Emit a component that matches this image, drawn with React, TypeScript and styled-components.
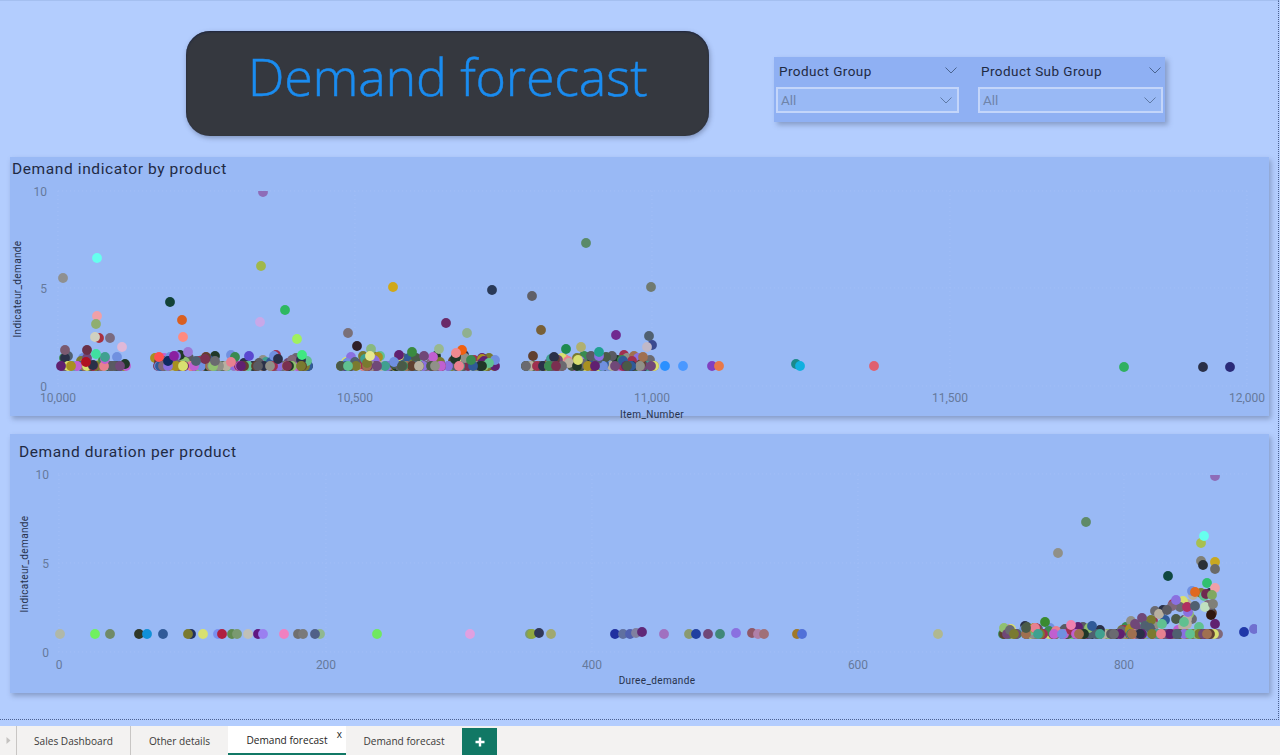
import React, { FunctionComponent } from "react";
import styled, { createGlobalStyle } from "styled-components";

const GlobalStyle = createGlobalStyle`
  html, body {
    margin: 0;
    padding: 0;
    overflow: hidden;
    background: #f3f2f1;
  }
`;

type Dot = [number, number, string];

// same seed each run so the clusters stay where they are
const makeRandom = (seed: number) => () => {
  seed = (seed * 1664525 + 1013904223) % 4294967296;
  return seed / 4294967296;
};

const PALETTE = [
  "#5a5a62", "#7a3050", "#3a8a50", "#c060d0", "#d8e070", "#7a7a30", "#2a3048", "#8a70e0", "#a07050",
  "#40a090", "#704878", "#909088", "#e88090", "#b8b0a0", "#305a98", "#602070", "#90c070", "#203828",
  "#a89020", "#7090e0", "#a03050", "#506070", "#60c090", "#604030", "#6a6a70", "#4a5a48", "#806878",
];

const cluster = (seed: number, from: number, to: number, base: number, count: number, lift: (x: number, r: number) => number): Dot[] => {
  const random = makeRandom(seed);
  const dots: Dot[] = [];
  for (let i = 0; i < count; i++) {
    const x = from + random() * (to - from);
    const up = random() < 0.7 ? 0 : lift(x, random());
    dots.push([Math.round(x), Math.round(base - up), PALETTE[Math.floor(random() * PALETTE.length)]]);
  }
  return dots;
};

const flatLift = (_x: number, r: number) => 2 + r * 9;

const DEMAND_DOTS: Dot[] = [
  ...cluster(11, 59, 126, 366, 70, (_x, r) => r * 10),
  ...cluster(12, 155, 308, 366, 170, flatLift),
  ...cluster(13, 340, 495, 366, 170, flatLift),
  ...cluster(14, 525, 655, 366, 150, flatLift),
  [63, 278, "#8f9090"], [97, 258, "#66ffee"], [97, 316, "#f0a0a8"], [96, 324, "#8fae70"], [99, 338, "#a83040"],
  [95, 337, "#d0d0c0"], [110, 338, "#7a6a80"], [122, 347, "#e0b8d8"], [65, 350, "#7a5a70"], [87, 350, "#6a3048"],
  [96, 354, "#40e0a0"], [86, 362, "#b01020"], [170, 302, "#124238"], [182, 320, "#d95f20"], [183, 337, "#ff8a80"],
  [188, 352, "#9a7ad8"], [159, 357, "#ff5050"], [168, 361, "#102a60"], [174, 356, "#8a20a0"], [263, 192, "#8e6cb8"],
  [261, 266, "#a0b84a"], [260, 322, "#c8a8e8"], [285, 310, "#2eb860"], [297, 339, "#a0f060"], [302, 355, "#40e880"],
  [249, 356, "#5a48d0"], [348, 333, "#7a7078"], [357, 346, "#301f28"], [371, 349, "#88b880"], [370, 356, "#e8e890"],
  [393, 287, "#d0a818"], [412, 352, "#3a8a40"], [446, 323, "#6a2a68"], [467, 333, "#90b090"], [492, 290, "#2a3a58"],
  [532, 296, "#606068"], [541, 330, "#786038"], [586, 243, "#5a8a68"], [651, 287, "#707a70"], [616, 335, "#702a90"],
  [649, 336, "#506070"], [652, 345, "#3a4a90"], [566, 349, "#1e8a50"], [581, 347, "#b0b070"], [599, 352, "#20a090"],
  [647, 347, "#c0b8c8"], [439, 349, "#98b890"], [462, 350, "#f06010"], [456, 353, "#f08a90"],
  [665, 366, "#2a90ff"], [683, 366, "#4a98ff"], [712, 366, "#8040c0"], [719, 366, "#e87848"], [796, 364, "#1a8a8a"],
  [800, 366, "#10b0e0"], [874, 366, "#e06070"], [1124, 367, "#30b060"], [1203, 367, "#2a3048"], [1230, 367, "#2a2a78"],
];

const rampLift = (x: number, r: number) => {
  const t = Math.max(0, (x - 1090) / 125);
  return 2 + r * (6 + t * t * 55);
};

const DURATION_DOTS: Dot[] = [
  [60, 634, "#b0b8a8"], [95, 634, "#70f060"], [110, 634, "#708a68"], [139, 634, "#303828"], [147, 634, "#1090d8"],
  [163, 634, "#305a98"], [191, 634, "#203060"], [188, 634, "#7a7a30"], [203, 634, "#d8e070"], [218, 634, "#7a90f0"],
  [222, 634, "#b02040"], [232, 634, "#608a50"], [237, 634, "#7a9a70"], [248, 634, "#c0c0b8"], [258, 634, "#601880"],
  [263, 634, "#9a80f0"], [284, 634, "#f080c0"], [298, 634, "#707070"], [303, 634, "#7a7a7a"], [320, 634, "#90b890"],
  [315, 634, "#506088"], [377, 634, "#70e860"], [470, 634, "#e0a0e0"], [530, 634, "#7a9a70"], [532, 634, "#90a840"],
  [539, 633, "#303858"], [551, 634, "#a0a870"], [615, 634, "#2030a0"], [623, 634, "#6070a0"], [630, 634, "#5060b0"],
  [636, 633, "#8080a0"], [642, 632, "#602878"], [664, 634, "#a070c0"], [689, 634, "#8a9a70"], [696, 634, "#2040a0"],
  [708, 634, "#704878"], [720, 634, "#408878"], [736, 633, "#8a70e0"], [752, 633, "#905868"], [758, 634, "#b080a8"],
  [764, 634, "#a07078"], [797, 634, "#a07828"], [802, 634, "#5070d8"], [938, 634, "#b0b890"],
  ...cluster(21, 1003, 1219, 634, 230, (x, r) => rampLift(x, r)),
  ...cluster(22, 1130, 1219, 634, 90, (x, r) => rampLift(x, r)),
  [1045, 622, "#3a8a30"], [1071, 625, "#f080b0"], [1058, 553, "#909088"], [1086, 522, "#5f8a68"], [1215, 476, "#8e6cb8"],
  [1201, 543, "#a8c050"], [1204, 536, "#66ffee"], [1201, 561, "#808078"], [1215, 562, "#c8a820"], [1203, 565, "#2a3038"],
  [1215, 569, "#6a6a68"], [1168, 576, "#0f4840"], [1207, 583, "#30c070"], [1215, 588, "#f0a0a8"], [1195, 592, "#e06820"],
  [1206, 594, "#702850"], [1212, 595, "#80a860"], [1187, 607, "#b03060"], [1195, 606, "#506070"], [1205, 607, "#c0e0c0"],
  [1213, 604, "#808078"], [1211, 615, "#301810"], [1244, 632, "#2038a8"], [1254, 629, "#7070d0"],
];

const Page = styled.div`
  width: 1280px;
  height: 755px;
  display: flex;
  flex-direction: column;
  font-family: "Roboto", "Liberation Sans", sans-serif;
  overflow: hidden;
`;

const Stage = styled.main`
  height: 726px;
  background: #b3cdfe;
`;

const Canvas = styled.div`
  width: 1279px;
  height: 720px;
  box-sizing: border-box;
  border-top: 1px solid #a4bff0;
  border-right: 1px dotted #4a6090;
  border-bottom: 1px dotted #4a6090;
`;

const HeaderRow = styled.header`
  display: flex;
  align-items: flex-start;
  gap: 65px;
  padding: 30px 0 0 186px;
`;

const TitleCard = styled.div`
  width: 523px;
  height: 105px;
  box-sizing: border-box;
  padding-bottom: 16px;
  display: flex;
  align-items: center;
  justify-content: center;
  background: #35383f;
  border-radius: 24px;
  box-shadow: inset 0 1px 2px #1c2540, 1px 2px 5px rgba(50, 60, 90, 0.4);
  color: #1a8cf0;
  font-family: "Open Sans", "Liberation Sans", sans-serif;
  font-weight: 300;
  font-size: 52px;
  letter-spacing: -0.2px;
  -webkit-text-stroke: 0.5px #1a8cf0;
`;

const SlicerPanel = styled.div`
  width: 391px;
  height: 65px;
  margin-top: 26px;
  display: flex;
  justify-content: space-between;
  background: #8fb0f3;
  box-shadow: 3px 3px 5px rgba(70, 85, 120, 0.4);
`;

const Slicer = styled.div<{ $width: number }>`
  width: ${(p) => p.$width}px;
  box-sizing: border-box;
  padding: 0 2px;
`;

const SlicerHead = styled.div`
  height: 30px;
  display: flex;
  align-items: center;
  justify-content: space-between;
  padding: 0 2px 3px 3px;
  box-sizing: border-box;
  font-size: 13.5px;
  letter-spacing: 0.45px;
  color: #1f2a44;
`;

const SlicerBox = styled.div`
  height: 26px;
  box-sizing: border-box;
  display: flex;
  align-items: center;
  justify-content: space-between;
  padding: 0 5px 0 3px;
  background: #99b9f5;
  border: 2px solid #c3d5fa;
  color: #6f84aa;
  font-size: 13.5px;
`;

const Chevron: FunctionComponent<{ color: string }> = ({ color }) => (
  <svg width="12" height="7" viewBox="0 0 12 7">
    <path d="M0.5 0.5 L6 6 L11.5 0.5" fill="none" stroke={color} strokeWidth="1" />
  </svg>
);

const ChartPanel = styled.section<{ $top: number; $inset: number }>`
  width: 1259px;
  height: 259px;
  box-sizing: border-box;
  margin: ${(p) => p.$top}px 0 0 10px;
  display: flex;
  flex-direction: column;
  background: #99b9f5;
  box-shadow: 2px 3px 5px rgba(70, 85, 120, 0.4);
  padding-left: ${(p) => p.$inset}px;
  position: relative;
`;

const ChartTitle = styled.h2<{ $height: number }>`
  margin: 0;
  height: ${(p) => p.$height}px;
  display: flex;
  align-items: flex-end;
  font-size: 15.5px;
  font-weight: 400;
  letter-spacing: 0.6px;
  color: #1f2a44;
`;

const ChartSvg = styled.svg`
  position: absolute;
  left: 0;
  bottom: 0;
  display: block;
  overflow: visible;
`;

const DotLayer = styled.g`
  filter: blur(0.4px);
`;

type ChartProps = {
  id: string;
  top: number;
  height: number;
  dots: Dot[];
  xTicks: [number, string][];
  yTicks: [number, string][];
  xLabel: string;
  xLabelAt: [number, number];
  yLabelAt: [number, number];
  tickY: number;
  plotTop: number;
  gridBottom: number;
  tickLeft: number;
};

const ScatterChart: FunctionComponent<ChartProps> = (p) => (
  <ChartSvg width="1259" height={p.height} viewBox={`10 ${p.top} 1259 ${p.height}`}>
    <defs>
      <clipPath id={p.id}>
        <rect x="40" y={p.plotTop} width="1217" height={p.gridBottom - p.plotTop + 10} />
      </clipPath>
    </defs>
    {p.yTicks.map(([y]) => (
      <line key={y} x1="58" x2="1247" y1={y} y2={y} stroke="#a2bef7" strokeDasharray="1 3" />
    ))}
    {p.xTicks.map(([x]) => (
      <line key={x} x1={x} x2={x} y1={p.plotTop} y2={p.gridBottom} stroke="#a2bef7" strokeDasharray="1 3" />
    ))}
    <g clipPath={`url(#${p.id})`}>
      <DotLayer>
        {p.dots.map(([x, y, color], i) => (
          <circle key={i} cx={x} cy={y} r="4.9" fill={color} />
        ))}
      </DotLayer>
    </g>
    <g fontSize="12" fill="#66799c" fontFamily="Roboto, sans-serif">
      {p.yTicks.map(([y, label]) => (
        <text key={label} x={p.tickLeft} y={y + 5} textAnchor="end">{label}</text>
      ))}
      {p.xTicks.map(([x, label]) => (
        <text key={label} x={x} y={p.tickY} textAnchor="middle">{label}</text>
      ))}
    </g>
    <g fontSize="10" fill="#27324c" fontFamily="Roboto, sans-serif" letterSpacing="0.35">
      <text x={p.xLabelAt[0]} y={p.xLabelAt[1]} textAnchor="middle">{p.xLabel}</text>
      <text transform={`translate(${p.yLabelAt[0]} ${p.yLabelAt[1]}) rotate(-90)`} textAnchor="middle">Indicateur_demande</text>
    </g>
  </ChartSvg>
);

const TabBar = styled.nav`
  height: 29px;
  display: flex;
  background: #f3f2f1;
  font-family: "Open Sans", "Liberation Sans", sans-serif;
  font-size: 10.1px;
  color: #333;
`;

const ScrollCell = styled.div`
  width: 17px;
  box-sizing: border-box;
  display: flex;
  align-items: center;
  justify-content: center;
  border-right: 1px solid #c8c6c4;
`;

const Tab = styled.div<{ $width: number; $active?: boolean; $divider?: boolean }>`
  width: ${(p) => p.$width}px;
  box-sizing: border-box;
  display: flex;
  align-items: center;
  justify-content: center;
  position: relative;
  background: ${(p) => (p.$active ? "#ffffff" : "transparent")};
  color: ${(p) => (p.$active ? "#252423" : "#3b3a39")};
  border-right: ${(p) => (p.$divider ? "1px solid #c8c6c4" : "none")};
  border-bottom: ${(p) => (p.$active ? "2px solid #117865" : "none")};
`;

const CloseMark = styled.span`
  position: absolute;
  top: 2px;
  right: 4px;
  font-size: 10px;
  line-height: 12px;
  color: #252423;
`;

const AddTab = styled.button`
  width: 35px;
  margin-top: 2px;
  padding: 0;
  border: none;
  display: flex;
  align-items: center;
  justify-content: center;
  background: #117865;
`;

const App: FunctionComponent = () => {
  return (
    <>
      <GlobalStyle />
      <Page>
        <Stage>
          <Canvas>
            <HeaderRow>
              <TitleCard>Demand forecast</TitleCard>
              <SlicerPanel>
                <Slicer $width={187}>
                  <SlicerHead>
                    Product Group
                    <Chevron color="#4a6490" />
                  </SlicerHead>
                  <SlicerBox>
                    All
                    <Chevron color="#5f7aa6" />
                  </SlicerBox>
                </Slicer>
                <Slicer $width={189}>
                  <SlicerHead>
                    Product Sub Group
                    <Chevron color="#4a6490" />
                  </SlicerHead>
                  <SlicerBox>
                    All
                    <Chevron color="#5f7aa6" />
                  </SlicerBox>
                </Slicer>
              </SlicerPanel>
            </HeaderRow>

            <ChartPanel $top={21} $inset={2}>
              <ChartTitle $height={21}>Demand indicator by product</ChartTitle>
              <ScatterChart
                id="demand-clip"
                top={157}
                height={259}
                dots={DEMAND_DOTS}
                xTicks={[[58, "10,000"], [355, "10,500"], [652, "11,000"], [950, "11,500"], [1247, "12,000"]]}
                yTicks={[[191, "10"], [288, "5"], [386, "0"]]}
                xLabel="Item_Number"
                xLabelAt={[652, 418]}
                yLabelAt={[21, 289]}
                tickY={402}
                plotTop={191}
                gridBottom={386}
                tickLeft={47}
              />
            </ChartPanel>

            <ChartPanel $top={18} $inset={9}>
              <ChartTitle $height={27}>Demand duration per product</ChartTitle>
              <ScatterChart
                id="duration-clip"
                top={434}
                height={259}
                dots={DURATION_DOTS}
                xTicks={[[59, "0"], [326, "200"], [592, "400"], [858, "600"], [1124, "800"]]}
                yTicks={[[474, "10"], [563, "5"], [652, "0"]]}
                xLabel="Duree_demande"
                xLabelAt={[657, 684]}
                yLabelAt={[28, 564]}
                tickY={669}
                plotTop={475}
                gridBottom={652}
                tickLeft={49}
              />
            </ChartPanel>
          </Canvas>
        </Stage>

        <TabBar>
          <ScrollCell>
            <svg width="5" height="7" viewBox="0 0 5 7">
              <path d="M0.5 0 L4.5 3.5 L0.5 7 Z" fill="#c4c2c0" />
            </svg>
          </ScrollCell>
          <Tab $width={114} $divider>Sales Dashboard</Tab>
          <Tab $width={97}>Other details</Tab>
          <Tab $width={118} $active>
            Demand forecast
            <CloseMark>x</CloseMark>
          </Tab>
          <Tab $width={116}>Demand forecast</Tab>
          <AddTab aria-label="New page">
            <svg width="10" height="10" viewBox="0 0 10 10">
              <path d="M5 0.5 V9.5 M0.5 5 H9.5" stroke="#ffffff" strokeWidth="2.4" />
            </svg>
          </AddTab>
        </TabBar>
      </Page>
    </>
  );
};

export default App;
